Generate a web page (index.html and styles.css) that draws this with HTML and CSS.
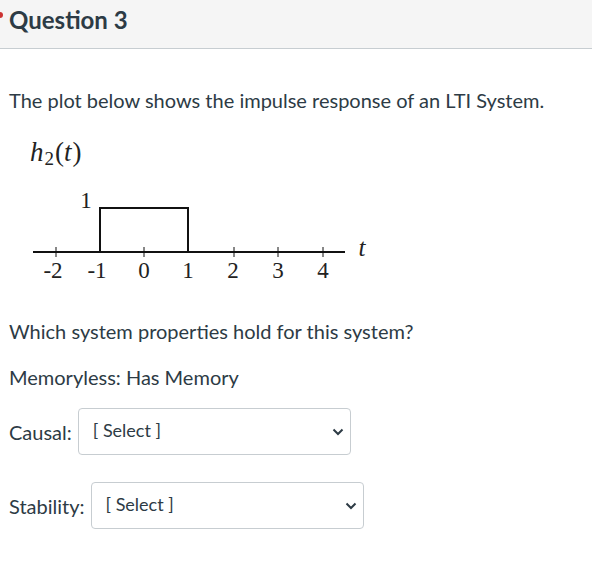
FILE: index.html
```html
<!DOCTYPE html>
<html>
<head>
<meta charset="utf-8">
<link rel="stylesheet" href="styles.css">
</head>
<body>
<div class="header">
  <span class="marker"></span>
  <h2 class="title">Question 3</h2>
</div>
<div class="content">
  <p class="intro">The plot below shows the impulse response of an LTI System.</p>
  <div class="fname"><i>h</i><sub>2</sub>(<i>t</i>)</div>
  <svg class="plot" width="360" height="106" viewBox="0 0 360 106">
    <g stroke="#111" fill="none">
      <line x1="5" y1="68" x2="317" y2="68" stroke-width="2"/>
      <line x1="28" y1="63" x2="28" y2="73" stroke-width="1"/>
      <line x1="116" y1="63" x2="116" y2="73" stroke-width="1"/>
      <line x1="206" y1="63" x2="206" y2="73" stroke-width="1"/>
      <line x1="250" y1="63" x2="250" y2="73" stroke-width="1"/>
      <line x1="295" y1="63" x2="295" y2="73" stroke-width="1"/>
      <polyline points="72,68 72,24 160,24 160,68" stroke-width="2"/>
    </g>
    <g class="lbl">
      <text x="58" y="24">1</text>
      <text x="25" y="94">-2</text>
      <text x="69" y="94">-1</text>
      <text x="116" y="94">0</text>
      <text x="160" y="94">1</text>
      <text x="205" y="94">2</text>
      <text x="250" y="94">3</text>
      <text x="295" y="94">4</text>
      <text class="tl" x="334" y="72">t</text>
    </g>
  </svg>
  <p class="q first">Which system properties hold for this system?</p>
  <p class="q">Memoryless: Has Memory</p>
  <div class="row">
    <label class="lab">Causal:</label>
    <div class="sel"><span>[ Select ]</span><svg width="12" height="8" viewBox="0 0 12 8"><polyline points="1.5,1.5 6,6 10.5,1.5" fill="none" stroke="#2d3b45" stroke-width="2"/></svg></div>
  </div>
  <div class="row">
    <label class="lab">Stability:</label>
    <div class="sel"><span>[ Select ]</span><svg width="12" height="8" viewBox="0 0 12 8"><polyline points="1.5,1.5 6,6 10.5,1.5" fill="none" stroke="#2d3b45" stroke-width="2"/></svg></div>
  </div>
</div>
</body>
</html>
```
FILE: styles.css
```css
html, body { margin: 0; padding: 0; background: #fff; }
body { font-family: Lato, "Noto Sans", sans-serif; color: #2d3b45; width: 592px; overflow: hidden; }
.header { position: relative; height: 48px; background: #f5f5f5; border-bottom: 1px solid #c7cdd1; display: flex; align-items: center; padding-left: 9px; }
.marker { position: absolute; left: -3px; top: 12px; width: 6px; height: 6px; border-radius: 50%; background: #c33; }
.title { margin: 0; font-size: 24px; font-weight: 700; line-height: 1; padding-bottom: 8px; }
.content { padding: 0 9px; }
.intro { margin: 39px 0 0; font-size: 20px; line-height: 24px; }
.fname { margin: 25px 0 0 21px; font-family: "Liberation Serif", serif; font-size: 27px; line-height: 30px; height: 30px; color: #222; }
.fname i { margin-right: 1px; }
.fname sub { font-size: 19px; vertical-align: -4px; line-height: 0; font-style: normal; margin-right: 1px; }
.plot { display: block; margin: 17px 0 0 19px; }
.lbl { font-family: "Liberation Serif", serif; font-size: 23px; fill: #222; text-anchor: middle; }
.tl { font-style: italic; font-size: 25px; }
.q { margin: 22px 0 0; font-size: 20px; line-height: 24px; }
.q.first { margin-top: 29px; }
.row { display: flex; align-items: center; margin-top: 19px; }
.row + .row { margin-top: 27px; }
.lab { font-size: 20px; margin-right: 6px; }
.sel { width: 271px; height: 45px; border: 1px solid #c7cdd1; border-radius: 4px; display: flex; align-items: center; justify-content: space-between; }
.sel span { font-size: 18px; margin-left: 14px; margin-top: -4px; }
.sel svg { margin-right: 6px; }
```
